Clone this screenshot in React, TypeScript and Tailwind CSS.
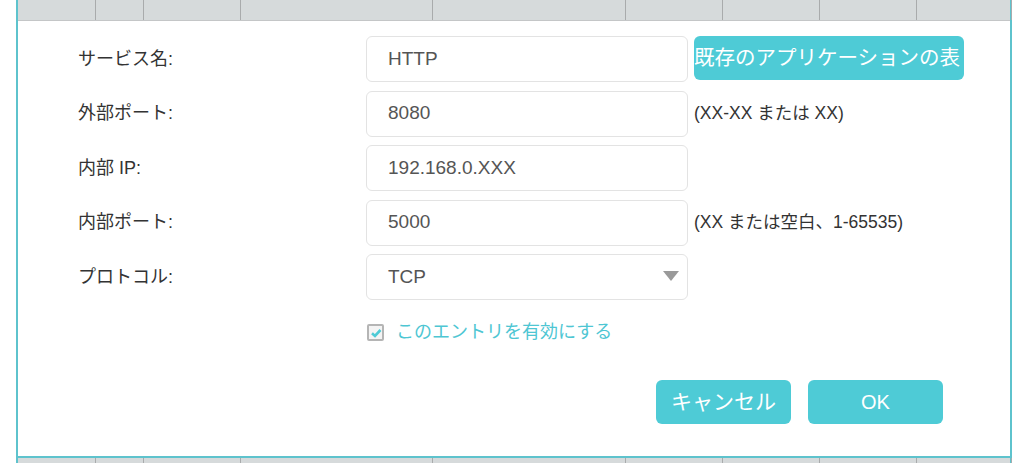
const COLS = [78, 48, 97, 192, 193, 97, 97, 97, 95]

const FIELDS: { label: string; value: string; hint?: string; action?: string; select?: boolean }[] = [
  { label: 'サービス名:', value: 'HTTP', action: '既存のアプリケーションの表' },
  { label: '外部ポート:', value: '8080', hint: '(XX-XX または XX)' },
  { label: '内部 IP:', value: '192.168.0.XXX' },
  { label: '内部ポート:', value: '5000', hint: '(XX または空白、1-65535)' },
  { label: 'プロトコル:', value: 'TCP', select: true },
]

function TableStrip({ className = '' }: { className?: string }) {
  return (
    <div className={`flex bg-[#d6dadb] ${className}`}>
      {COLS.map((w, i) => (
        <div
          key={i}
          className="shrink-0 border-r border-[#a9abac]"
          style={{ width: w }}
        />
      ))}
      <div className="flex-1" />
    </div>
  )
}

export default function App() {
  return (
    <div
      className="h-[463px] w-[1024px] overflow-hidden bg-white text-[#333]"
      style={{ fontFamily: '"Liberation Sans", "Noto Sans CJK JP", sans-serif' }}
    >
      <div className="ml-[16px] w-[996px] border-x-2 border-[#5ec3cd]">
        <TableStrip className="h-[20px]" />
        <div className="h-px bg-[#c4c6c7]" />

        <div className="flex h-[437px] flex-col border-b-2 border-[#5ec3cd] bg-white pl-[60px] pt-[15px]">
          <div className="flex flex-col gap-[8.5px]">
            {FIELDS.map((f) => (
              <div key={f.label} className="flex h-[46px] items-center">
                <div className="w-[288px] shrink-0 text-[18px]">{f.label}</div>
                <div className="relative flex h-[46px] w-[322px] shrink-0 items-center rounded-[6px] border border-[#e3e3e3] bg-white pl-[21px] text-[19px] text-[#555]">
                  {f.value}
                  {f.select && (
                    <span className="absolute right-[8px] top-[16px] h-0 w-0 border-x-[8px] border-t-[10px] border-x-transparent border-t-[#9a9a9a]" />
                  )}
                </div>
                {f.action && (
                  <button
                    type="button"
                    className="ml-[6px] h-[44px] w-[270px] shrink-0 self-start overflow-hidden whitespace-nowrap rounded-[6px] bg-[#4ecbd6] text-left text-[20.5px] text-white"
                  >
                    {f.action}
                  </button>
                )}
                {f.hint && <div className="ml-[6px] text-[17.5px]">{f.hint}</div>}
              </div>
            ))}
          </div>

          <label className="ml-[289px] mt-[19px] flex items-center gap-[12px]">
            <span className="flex h-[17px] w-[17px] shrink-0 items-center justify-center rounded-[2px] border-2 border-[#b5b5b5] bg-[#f4f4f4]">
              <svg viewBox="0 0 12 12" className="h-[12px] w-[12px]">
                <path d="M2 6.2 L5 9 L10.5 3" fill="none" stroke="#4ecbd6" strokeWidth="2.6" />
              </svg>
            </span>
            <span className="text-[18px] text-[#4ec6d3]">このエントリを有効にする</span>
          </label>

          <div className="mt-[34px] flex gap-[17px] pl-[578px]">
            <button
              type="button"
              className="h-[44px] w-[135px] rounded-[6px] bg-[#4ecbd6] text-[21px] text-white"
            >
              キャンセル
            </button>
            <button
              type="button"
              className="h-[44px] w-[135px] rounded-[6px] bg-[#4ecbd6] text-[20px] text-white"
            >
              OK
            </button>
          </div>
        </div>

        <TableStrip className="h-[10px]" />
      </div>
    </div>
  )
}
